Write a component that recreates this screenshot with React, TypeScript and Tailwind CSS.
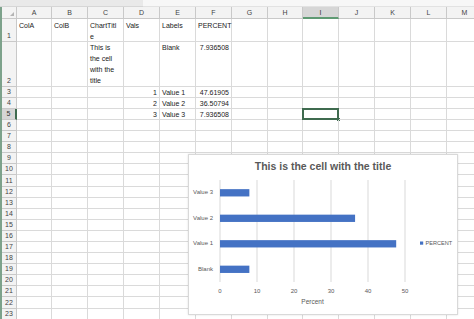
const COLS = [
  { id: 'A', w: 35 },
  { id: 'B', w: 36 },
  { id: 'C', w: 36 },
  { id: 'D', w: 36 },
  { id: 'E', w: 36 },
  { id: 'F', w: 36 },
  { id: 'G', w: 36 },
  { id: 'H', w: 35 },
  { id: 'I', w: 36 },
  { id: 'J', w: 36 },
  { id: 'K', w: 36 },
  { id: 'L', w: 36 },
  { id: 'M', w: 36 },
]

interface Cell {
  lines: string[]
  right?: boolean
}

// cell contents, keyed by "row:col"
const CELLS: Record<string, Cell> = {
  '1:A': { lines: ['ColA'] },
  '1:B': { lines: ['ColB'] },
  '1:C': { lines: ['ChartTitl', 'e'] },
  '1:D': { lines: ['Vals'] },
  '1:E': { lines: ['Labels'] },
  '1:F': { lines: ['PERCENT'] },
  '2:C': { lines: ['This is', 'the cell', 'with the', 'title'] },
  '2:E': { lines: ['Blank'] },
  '2:F': { lines: ['7.936508'], right: true },
  '3:D': { lines: ['1'], right: true },
  '3:E': { lines: ['Value 1'] },
  '3:F': { lines: ['47.61905'], right: true },
  '4:D': { lines: ['2'], right: true },
  '4:E': { lines: ['Value 2'] },
  '4:F': { lines: ['36.50794'], right: true },
  '5:D': { lines: ['3'], right: true },
  '5:E': { lines: ['Value 3'] },
  '5:F': { lines: ['7.936508'], right: true },
}

const ROWS = Array.from({ length: 23 }, (_, i) => {
  const n = i + 1
  const h = n === 1 ? 22.4 : n === 2 ? 45 : 11.1
  return { n, h }
})

const SERIES = [
  { label: 'Value 3', v: 7.936508 },
  { label: 'Value 2', v: 36.50794 },
  { label: 'Value 1', v: 47.61905 },
  { label: 'Blank', v: 7.936508 },
]

function Chart() {
  const x0 = 32
  const unit = 3.7 // px per percent
  const top = 26
  const band = 25.5
  return (
    <div className="absolute left-[188px] top-[154px] h-[161px] w-[270px] border border-[#d9d9d9] bg-white shadow-[0_0_2px_rgba(0,0,0,0.12)]">
      <div className="pt-[5px] text-center text-[10.5px] font-bold leading-[12px] text-[#595959]">
        This is the cell with the title
      </div>
      <svg className="absolute left-[-1px] top-[-1px]" width="270" height="161">
        {[0, 10, 20, 30, 40, 50].map((t) => (
          <g key={t}>
            <line x1={x0 + t * unit} x2={x0 + t * unit} y1={top} y2={top + band * 4} stroke="#d9d9d9" strokeWidth="1" />
            <text x={x0 + t * unit} y={137} fontSize="6" fill="#595959" textAnchor="middle" dominantBaseline="middle">
              {t}
            </text>
          </g>
        ))}
        {SERIES.map((s, i) => {
          const cy = top + band * i + band / 2
          return (
            <g key={s.label}>
              <rect x={x0} y={cy - 3.6} width={s.v * unit} height={7.3} fill="#4472c4" />
              <text x={25} y={cy} fontSize="6" fill="#595959" textAnchor="end" dominantBaseline="middle">
                {s.label}
              </text>
            </g>
          )
        })}
        <text x={x0 + 25 * unit} y={148} fontSize="6.5" fill="#595959" textAnchor="middle" dominantBaseline="middle">
          Percent
        </text>
        <rect x={232} y={87.5} width={3.2} height={3.2} fill="#4472c4" />
        <text x={237.5} y={89.3} fontSize="5.6" fill="#595959" dominantBaseline="middle">
          PERCENT
        </text>
      </svg>
    </div>
  )
}

export default function App() {
  return (
    <div className="relative h-[319px] w-[474px] overflow-hidden bg-white font-['Liberation_Sans',Arial,sans-serif] text-[7px] text-[#222]">
      {/* formula bar edge */}
      <div className="flex h-[7px]">
        <div className="w-[143px] border-b border-[#d6d6d6] bg-[#e9e9e9]" />
        <div className="flex-1 border-b border-[#e2e2e2] bg-[#f7f7f7]" />
      </div>
      <div className="flex">
        <div className="w-[2px] shrink-0 bg-[#7da28b]" />
        <div className="flex flex-col">
          {/* column headers */}
          <div className="flex h-[12.3px]">
            <div className="relative w-[15px] shrink-0 border-b border-r border-[#c9c9c9] bg-[#f3f3f3]">
              <div className="absolute bottom-[2px] right-[2px] h-0 w-0 border-l-[4px] border-t-[4px] border-l-transparent border-t-transparent border-b-0 border-r-0 [border-bottom:4px_solid_#b4b4b4] [border-left:4px_solid_transparent]" />
            </div>
            {COLS.map((c) => (
              <div
                key={c.id}
                style={{ width: c.w }}
                className={
                  c.id === 'I'
                    ? 'flex shrink-0 items-center justify-center border-b-2 border-r border-b-[#5f9a73] border-r-[#c9c9c9] bg-[#d6d6d6] leading-none text-[#333]'
                    : 'flex shrink-0 items-center justify-center border-b border-r border-[#c9c9c9] bg-[#f3f3f3] leading-none text-[#444]'
                }
              >
                {c.id}
              </div>
            ))}
          </div>
          {ROWS.map((r) => (
            <div key={r.n} className="flex" style={{ height: r.h }}>
              <div
                className={
                  r.n === 5
                    ? 'flex w-[15px] shrink-0 items-end justify-center border-b border-r-2 border-b-[#c9c9c9] border-r-[#3f6b4f] bg-[#d6d6d6] pb-[1px] leading-[9px] text-[#333]'
                    : 'flex w-[15px] shrink-0 items-end justify-center border-b border-r border-[#c9c9c9] bg-[#f3f3f3] pb-[1px] leading-[9px] text-[#444]'
                }
              >
                {r.n}
              </div>
              {COLS.map((c) => {
                const cell = CELLS[`${r.n}:${c.id}`]
                const sel = r.n === 5 && c.id === 'I'
                return (
                  <div
                    key={c.id}
                    style={{ width: c.w }}
                    className="relative shrink-0 whitespace-nowrap border-b border-r border-[#dadada] px-[2px] pt-[0.5px] leading-[11px]"
                  >
                    {cell && (
                      <div className={cell.right ? 'text-right' : ''}>
                        {cell.lines.map((l) => (
                          <div key={l}>{l}</div>
                        ))}
                      </div>
                    )}
                    {sel && (
                      <>
                        <div className="absolute inset-[-1px] border-2 border-[#3f6b4f]" />
                        <div className="absolute bottom-[-2px] right-[-2px] h-[3px] w-[3px] bg-[#3f6b4f]" />
                      </>
                    )}
                  </div>
                )
              })}
            </div>
          ))}
        </div>
      </div>
      <Chart />
    </div>
  )
}
